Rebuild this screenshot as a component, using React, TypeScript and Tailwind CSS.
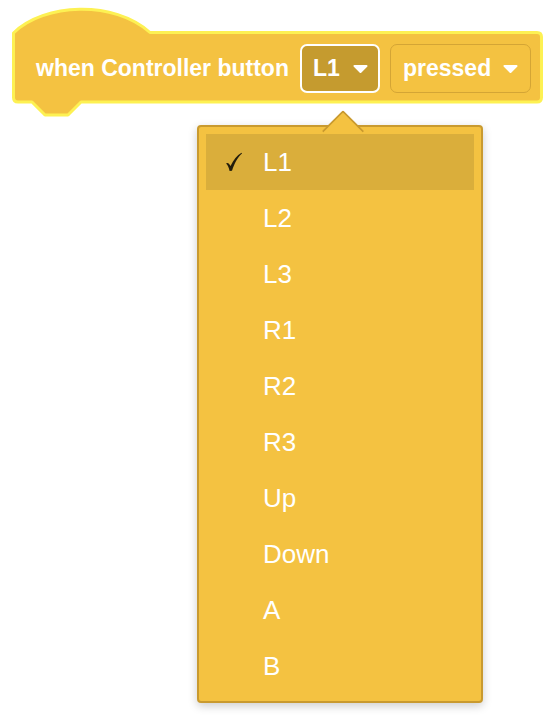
import React from "react";

const ITEMS = ["L1", "L2", "L3", "R1", "R2", "R3", "Up", "Down", "A", "B"];

function Caret() {
  return (
    <svg width="15" height="8" viewBox="0 0 15 8" className="shrink-0">
      <path
        d="M1.5 1 L13.5 1 L7.5 7 Z"
        fill="#fff"
        stroke="#fff"
        strokeWidth="2"
        strokeLinejoin="round"
      />
    </svg>
  );
}

function Check() {
  return (
    <svg width="18" height="20" viewBox="0 0 18 20">
      <path
        d="M1 11.5 C2.5 10.2 4 11 5.5 14 C8.5 8 12 3.5 16.5 0.8 L17 1.4 C12.5 5.5 9.5 11 7 18.8 L4.6 19 C3.8 15.5 2.8 12.8 1 11.5 Z"
        fill="#231d0c"
      />
    </svg>
  );
}

export default function App() {
  const selected = "L1";

  return (
    <div
      className="relative h-[724px] w-[558px] overflow-hidden bg-white"
      style={{ fontFamily: '"Liberation Sans", Arial, Helvetica, sans-serif' }}
    >
      {/* hat block */}
      <div className="relative h-[120px]">
        <svg
          className="absolute inset-0"
          width="558"
          height="120"
          viewBox="0 0 558 120"
        >
          <path
            d="M13.5 33 C44 3, 114 0, 150 32.5 L537 32.5 Q541.5 32.5 541.5 37 L541.5 97.5 Q541.5 102 537 102 L81 102 L68 115 L45 115 L32 102 L18 102 Q13.5 102 13.5 97.5 Z"
            fill="#F4C241"
            stroke="#FDF153"
            strokeWidth="3"
            strokeLinejoin="round"
          />
        </svg>

        <div className="relative flex items-center pl-[36px] pt-[44px] text-[23px] font-bold text-white">
          <span className="leading-none">when Controller button</span>

          <div className="ml-[11px] flex h-[49px] w-[80px] items-center justify-between rounded-[7px] border-2 border-white bg-[#C59B2F] pl-[11px] pr-[10px]">
            <span className="leading-none">L1</span>
            <Caret />
          </div>

          <div className="ml-[10px] flex h-[49px] w-[141px] items-center justify-between rounded-[7px] border border-[#D4A535] bg-[#F4C241] pl-[12px] pr-[12px]">
            <span className="leading-none">pressed</span>
            <Caret />
          </div>
        </div>
      </div>

      {/* dropdown menu */}
      <div className="absolute left-[197px] top-[125px] h-[578px] w-[286px] rounded-[4px] border-2 border-[#C99A2F] bg-[#F4C241] px-[7px] pt-[7px] shadow-[0_3px_10px_rgba(0,0,0,0.2)]">
        <div className="absolute left-[129px] top-[-11px] h-[30px] w-[30px] rotate-45 rounded-tl-[3px] border-l-2 border-t-2 border-[#C99A2F] bg-[#F4C241]" />
        <div className="relative flex flex-col">
          {ITEMS.map((item) => (
            <div
              key={item}
              className={
                "flex h-[56px] items-center text-[26px] leading-none text-white " +
                (item === selected ? "bg-[#DAAE3B]" : "")
              }
            >
              <span className="flex w-[57px] justify-center pr-[1px]">
                {item === selected && <Check />}
              </span>
              <span>{item}</span>
            </div>
          ))}
        </div>
      </div>
    </div>
  );
}
